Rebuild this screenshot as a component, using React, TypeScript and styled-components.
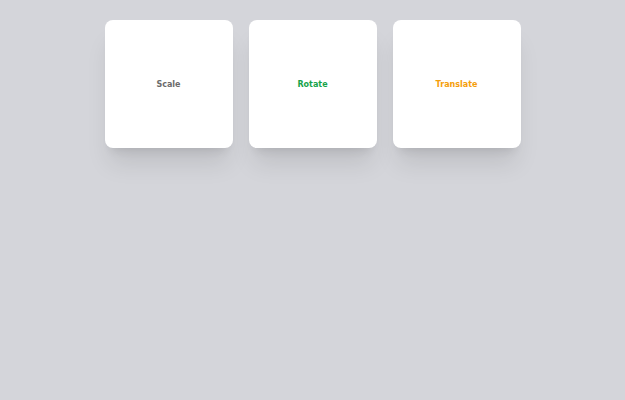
import React from 'react';
import styled, { createGlobalStyle } from 'styled-components';

const GlobalStyle = createGlobalStyle`
    html, body {
        margin: 0;
        padding: 0;
        background: #d4d5da;
        font-family: 'DejaVu Sans', sans-serif;
    }
`

const Page = styled.div`
    min-height: 400px;
    display: flex;
    justify-content: center;
    align-items: flex-start;
    gap: 16px;
    padding-top: 20px;
    box-sizing: border-box;
`

const Card = styled.div`
    width: 128px;
    height: 128px;
    background: #ffffff;
    border-radius: 8px;
    box-shadow: 0 20px 25px -5px rgba(0, 0, 0, 0.1), 0 8px 10px -6px rgba(0, 0, 0, 0.1);
    display: flex;
    align-items: center;
    justify-content: center;
`

const Label = styled.span<{ $color: string }>`
    font-size: 8px;
    font-weight: 700;
    color: ${p => p.$color};
`

const cards = [
    { label: 'Scale', color: '#6b6b6b' },
    { label: 'Rotate', color: '#16a34a' },
    { label: 'Translate', color: '#f59e0b' },
];

const App: React.FC = () => {
    return (
        <>
            <GlobalStyle />
            <Page>
                {cards.map(c => (
                    <Card key={c.label}>
                        <Label $color={c.color}>{c.label}</Label>
                    </Card>
                ))}
            </Page>
        </>
    )
}

export default App;
